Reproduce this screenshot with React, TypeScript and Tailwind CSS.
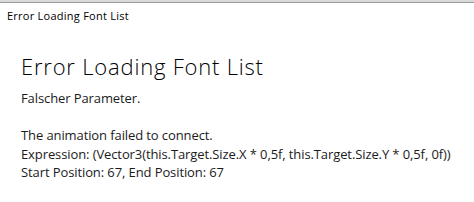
import React from 'react';

const message = `Falscher Parameter.

The animation failed to connect.
Expression: (Vector3(this.Target.Size.X * 0,5f, this.Target.Size.Y * 0,5f, 0f))
Start Position: 67, End Position: 67`;

export default function App() {
  return (
    <div className="w-[474px] h-[202px] bg-white overflow-hidden flex flex-col font-['Open_Sans',sans-serif] text-[#1b1b1b]">
      {/* window frame top edge */}
      <div className="h-[2px] bg-[#d9d9d9]" />
      <div className="h-px bg-[#9a9a9a]" />

      {/* title bar */}
      <div className="h-[27px] px-[7px] flex items-center text-[11px] tracking-[0.25px] text-black">
        Error Loading Font List
      </div>

      {/* dialog content */}
      <div className="px-[21px] pt-[22px] flex flex-col">
        <h1 className="text-[22px] leading-[28px] font-light tracking-[0.8px] text-black">Error Loading Font List</h1>
        <p className="mt-[9px] text-[13px] leading-[18.5px] tracking-[-0.1px] whitespace-pre">{message}</p>
      </div>
    </div>
  );
}
